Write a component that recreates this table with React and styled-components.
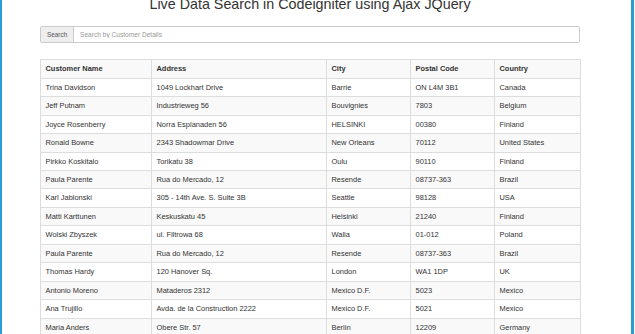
import React from "react";
import styled, { createGlobalStyle } from "styled-components";

const GlobalStyle = createGlobalStyle`
  html, body { margin: 0; padding: 0; background: #fff; }
  body { font-family: "Liberation Sans", Arial, sans-serif; color: #333; }
`;

const Page = styled.div`
  box-sizing: border-box;
  height: 100vh;
  margin-right: 1px;
  border-left: 2px solid #2a9dd8;
  border-right: 3px solid #2a9dd8;
  background: #fff;
  overflow: hidden;
`;

const Container = styled.div`
  width: 540px;
  padding-left: 38px;
`;

const Title = styled.h3`
  margin: -3.6px 0 0;
  font-size: 14.3px;
  line-height: 16px;
  font-weight: normal;
  text-align: center;
  color: #333;
`;

const InputGroup = styled.div`
  box-sizing: border-box;
  display: flex;
  height: 17px;
  margin-top: 13.6px;
  border: 1px solid #ccc;
  border-radius: 2px;
  overflow: hidden;
`;

const Addon = styled.span`
  box-sizing: border-box;
  display: flex;
  align-items: center;
  width: 33px;
  padding-left: 6px;
  background: #eee;
  border-right: 1px solid #ccc;
  font-size: 6.4px;
  color: #555;
`;

const Input = styled.input`
  flex: 1;
  border: none;
  outline: none;
  padding: 0 6px;
  font-family: "Liberation Sans", Arial, sans-serif;
  font-size: 6.6px;
  color: #555;
  &::placeholder { color: #999; }
`;

const Table = styled.table`
  margin-top: 16px;
  width: 540px;
  table-layout: fixed;
  border-collapse: collapse;
  font-size: 7.45px;
  color: #333;
  tbody tr:nth-child(even) { background: #f9f9f9; }
`;

const HeadRow = styled.tr`
  background: #f9f9f9;
`;

const Th = styled.th`
  border: 1px solid #ddd;
  padding: 4px 4.5px;
  line-height: 9.7px;
  text-align: left;
  font-weight: bold;
  white-space: nowrap;
`;

const Td = styled.td`
  border: 1px solid #ddd;
  padding: 4px 4.5px;
  line-height: 9.46px;
  text-align: left;
  white-space: nowrap;
`;

const columns = [
  { label: "Customer Name", width: 111 },
  { label: "Address", width: 175 },
  { label: "City", width: 84 },
  { label: "Postal Code", width: 84 },
  { label: "Country", width: 86 },
];

const rows = [
  ["Trina Davidson", "1049 Lockhart Drive", "Barrie", "ON L4M 3B1", "Canada"],
  ["Jeff Putnam", "Industrieweg 56", "Bouvignies", "7803", "Belgium"],
  ["Joyce Rosenberry", "Norra Esplanaden 56", "HELSINKI", "00380", "Finland"],
  ["Ronald Bowne", "2343 Shadowmar Drive", "New Orleans", "70112", "United States"],
  ["Pirkko Koskitalo", "Torikatu 38", "Oulu", "90110", "Finland"],
  ["Paula Parente", "Rua do Mercado, 12", "Resende", "08737-363", "Brazil"],
  ["Karl Jablonski", "305 - 14th Ave. S. Suite 3B", "Seattle", "98128", "USA"],
  ["Matti Karttunen", "Keskuskatu 45", "Helsinki", "21240", "Finland"],
  ["Wolski Zbyszek", "ul. Filtrowa 68", "Walla", "01-012", "Poland"],
  ["Paula Parente", "Rua do Mercado, 12", "Resende", "08737-363", "Brazil"],
  ["Thomas Hardy", "120 Hanover Sq.", "London", "WA1 1DP", "UK"],
  ["Antonio Moreno", "Mataderos 2312", "Mexico D.F.", "5023", "Mexico"],
  ["Ana Trujillo", "Avda. de la Construction 2222", "Mexico D.F.", "5021", "Mexico"],
  ["Maria Anders", "Obere Str. 57", "Berlin", "12209", "Germany"],
  ["Hanna Moos", "Forsterstr. 57", "Mannheim", "68306", "Germany"],
];

export default function App() {
  return (
    <>
      <GlobalStyle />
      <Page>
        <Container>
          <Title>Live Data Search in Codeigniter using Ajax JQuery</Title>
          <InputGroup>
            <Addon>Search</Addon>
            <Input type="text" placeholder="Search by Customer Details" />
          </InputGroup>
          <Table>
            <colgroup>
              {columns.map((c) => (
                <col key={c.label} style={{ width: c.width }} />
              ))}
            </colgroup>
            <thead>
              <HeadRow>
                {columns.map((c) => (
                  <Th key={c.label}>{c.label}</Th>
                ))}
              </HeadRow>
            </thead>
            <tbody>
              {rows.map((r, i) => (
                <tr key={i}>
                  {r.map((cell, j) => (
                    <Td key={j}>{cell}</Td>
                  ))}
                </tr>
              ))}
            </tbody>
          </Table>
        </Container>
      </Page>
    </>
  );
}
